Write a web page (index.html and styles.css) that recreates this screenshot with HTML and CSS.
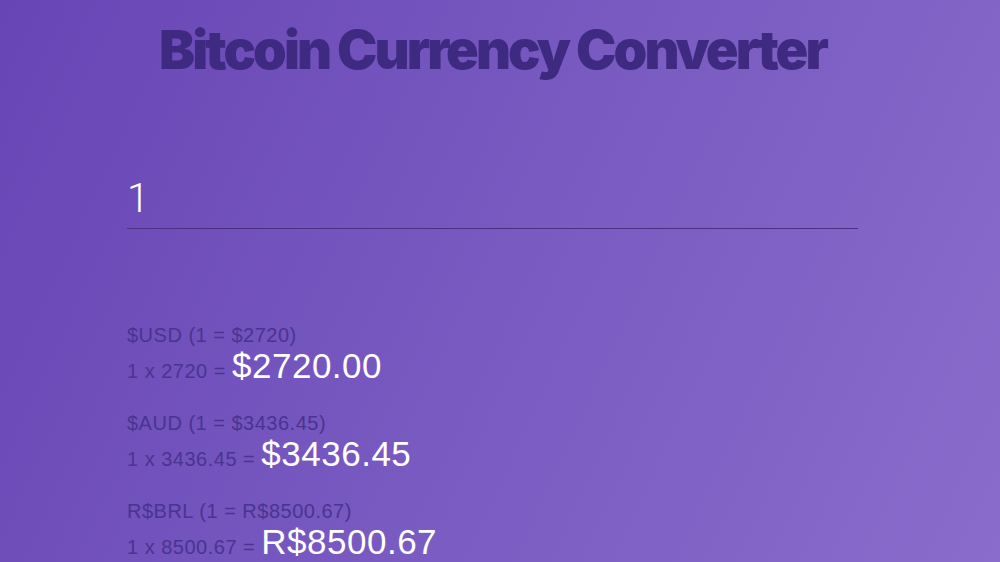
FILE: index.html
```html
<!DOCTYPE html>
<html>
<head>
<meta charset="utf-8">
<link rel="stylesheet" href="styles.css">
</head>
<body>
<main class="app">
  <h1 class="title">Bitcoin Currency Converter</h1>
  <div class="field">
    <input class="amount" type="text" value="1">
  </div>
  <section class="results">
    <div class="rate">
      <div class="label">$USD (1 = $2720)</div>
      <div class="calc"><span class="expr">1 x 2720 = </span><span class="value">$2720.00</span></div>
    </div>
    <div class="rate">
      <div class="label">$AUD (1 = $3436.45)</div>
      <div class="calc"><span class="expr">1 x 3436.45 = </span><span class="value">$3436.45</span></div>
    </div>
    <div class="rate">
      <div class="label">R$BRL (1 = R$8500.67)</div>
      <div class="calc"><span class="expr">1 x 8500.67 = </span><span class="value">R$8500.67</span></div>
    </div>
  </section>
</main>
</body>
</html>
```
FILE: styles.css
```css
html, body {
  margin: 0;
  height: 100%;
}
body {
  background: linear-gradient(115deg, #6845b5 0%, #7a5cc2 55%, #8a6ccc 100%);
  font-family: "Liberation Sans", Arial, sans-serif;
  overflow: hidden;
}
.app {
  padding: 0 142px 0 127px;
  display: flex;
  flex-direction: column;
}
.title {
  margin: 18px 0 0 0;
  text-align: center;
  font-family: Inter, "Liberation Sans", sans-serif;
  font-size: 54px;
  font-weight: 900;
  letter-spacing: -2.9px;
  color: #3e2a80;
  line-height: 64px;
}
.field {
  margin-top: 94px;
}
.amount {
  display: block;
  width: 100%;
  box-sizing: border-box;
  background: transparent;
  border: 0;
  border-bottom: 1px solid #4a3185;
  color: #ffffff;
  font-family: Roboto, "Liberation Sans", Arial, sans-serif;
  font-size: 40px;
  font-weight: 300;
  padding: 0 0 8px 0;
  height: 53px;
  outline: none;
}
.results {
  margin-top: 94px;
  display: flex;
  flex-direction: column;
  gap: 19px;
}
.label {
  font-size: 20px;
  letter-spacing: 0.5px;
  color: #4a3491;
  line-height: 24px;
}
.calc {
  line-height: 38px;
  color: #4a3491;
}
.expr {
  font-size: 20px;
  letter-spacing: 0.5px;
}
.value {
  font-size: 35px;
  letter-spacing: 0.5px;
  color: #ffffff;
}
```
